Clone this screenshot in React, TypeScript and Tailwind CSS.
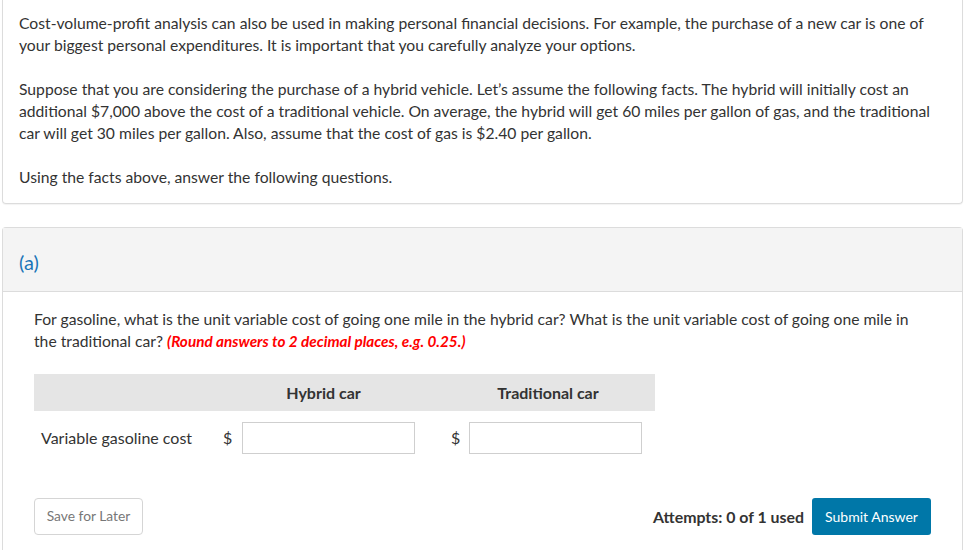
export default function App() {
  return (
    <div className="min-h-[550px] bg-white px-[2px] text-[#333] font-['Lato','Liberation_Sans',sans-serif]">
      {/* intro card (scrolled, top edge off screen) */}
      <div className="rounded-b border border-t-0 border-[#dcdcdc] pl-4 pr-4 pt-3 pb-[15px] text-[15.7px] leading-[22px] shadow-[0_1px_1px_rgba(0,0,0,0.05)]">
        <p>
          Cost-volume-profit analysis can also be used in making personal financial decisions. For example, the purchase of a new car is one of
          your biggest personal expenditures. It is important that you carefully analyze your options.
        </p>
        <p className="mt-[22px]">
          Suppose that you are considering the purchase of a hybrid vehicle. Let’s assume the following facts. The hybrid will initially cost an
          additional $7,000 above the cost of a traditional vehicle. On average, the hybrid will get 60 miles per gallon of gas, and the traditional
          car will get 30 miles per gallon. Also, assume that the cost of gas is $2.40 per gallon.
        </p>
        <p className="mt-[22px]">Using the facts above, answer the following questions.</p>
      </div>

      {/* part (a) */}
      <div className="mt-[23px] rounded-t border border-b-0 border-[#dcdcdc]">
        <div className="flex h-[64px] items-center border-b border-[#dcdcdc] bg-[#f4f4f4] pl-4 pt-[5px]">
          <span className="text-[20px] text-[#1a75b8]">(a)</span>
        </div>
        <div className="pl-[31px] pr-[31px] pt-[16px] pb-6">
          <p className="text-[15.7px] leading-[22px]">
            For gasoline, what is the unit variable cost of going one mile in the hybrid car? What is the unit variable cost of going one mile in
            the traditional car?{' '}
            <span className="text-[15.3px] font-bold italic text-[#ff0000]">(Round answers to 2 decimal places, e.g. 0.25.)</span>
          </p>

          <div className="mt-[22px] w-[621px] text-[16px]">
            <div className="grid h-[37px] grid-cols-[172px_235px_214px] items-center bg-[#e5e5e5] font-bold">
              <div />
              <div className="text-center">Hybrid car</div>
              <div className="text-center">Traditional car</div>
            </div>
            <div className="grid grid-cols-[172px_235px_214px] items-center pt-[11px]">
              <div className="pl-[7px]">Variable gasoline cost</div>
              <div className="flex items-center pl-[17px]">
                <span className="mr-[10px]">$</span>
                <input className="h-[32px] w-[173px] border border-[#cfcfcf] bg-white outline-none" />
              </div>
              <div className="flex items-center pl-[10px]">
                <span className="mr-[9px]">$</span>
                <input className="h-[32px] w-[173px] border border-[#cfcfcf] bg-white outline-none" />
              </div>
            </div>
          </div>

          <div className="mt-[44px] flex items-center justify-between">
            <button className="h-[37px] w-[109px] rounded border border-[#d5d5d5] bg-white text-[13.8px] text-[#777]">
              Save for Later
            </button>
            <div className="flex items-center gap-2">
              <span className="text-[15.9px] font-bold">Attempts: 0 of 1 used</span>
              <button className="h-[37px] w-[119px] rounded-[3px] bg-[#0077a8] text-[14px] text-white">
                Submit Answer
              </button>
            </div>
          </div>
        </div>
      </div>
    </div>
  );
}
